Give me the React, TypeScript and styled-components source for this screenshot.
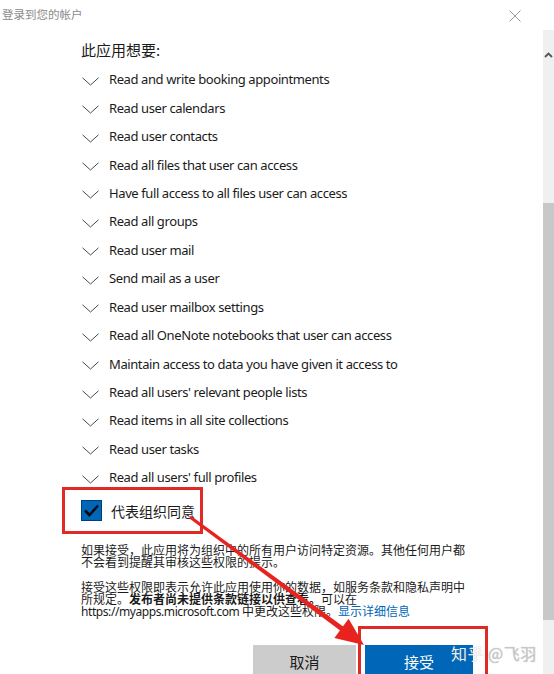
import React from "react";
import styled, { createGlobalStyle } from "styled-components";

const Global = createGlobalStyle`
  html, body { margin: 0; padding: 0; background: #fff; }
  body { width: 554px; height: 674px; overflow: hidden; font-family: "Noto Sans", "Noto Sans CJK SC", sans-serif; }
`;

const Page = styled.div`
  position: relative;
  width: 554px;
  height: 674px;
  overflow: hidden;
  display: flex;
  flex-direction: column;
`;

const TitleBar = styled.div`
  height: 30px;
  flex: none;
  display: flex;
  align-items: flex-start;
  justify-content: space-between;
  padding: 6px 33px 0 2px;
  box-sizing: border-box;
`;

const Title = styled.div`
  font-family: "Noto Sans CJK SC", sans-serif;
  font-size: 11.5px;
  line-height: 16px;
  color: #8a8a8a;
`;

const CloseIcon = styled.svg`
  margin-top: 4px;
`;

const Body = styled.div`
  flex: 1;
  display: flex;
  min-height: 0;
`;

const Content = styled.div`
  flex: 1;
  padding: 10px 0 0 81px;
  min-width: 0;
`;

const Heading = styled.div`
  font-family: "Noto Sans CJK SC", sans-serif;
  font-size: 15px;
  line-height: 20px;
  color: #1b1b1b;
  margin-bottom: 5px;
`;

const List = styled.ul`
  list-style: none;
  margin: 0;
  padding: 0;
`;

const Row = styled.li`
  height: 28.45px;
  display: flex;
  align-items: center;
  gap: 10px;
  font-family: "Noto Sans", sans-serif;
  font-size: 13px;
  letter-spacing: -0.4px;
  color: #1b1b1b;
`;

const Chevron = styled.svg`
  flex: none;
  margin-top: 4px;
  margin-left: 1px;
`;

const CheckRow = styled.div`
  display: flex;
  align-items: center;
  gap: 9px;
  margin-top: 8px;
  height: 22px;
`;

const Box = styled.div`
  width: 21px;
  height: 21px;
  box-sizing: border-box;
  background: #0067b8;
  border: 1px solid #00407a;
  display: flex;
  align-items: center;
  justify-content: center;
`;

const CheckLabel = styled.span`
  font-family: "Noto Sans CJK SC", sans-serif;
  font-size: 14px;
  color: #1b1b1b;
`;

const Para = styled.p`
  font-family: "Noto Sans CJK SC", sans-serif;
  font-size: 12px;
  line-height: 12px;
  color: #1b1b1b;
  margin: 0;
  width: 392px;
  word-break: break-all;
`;

const Para1 = styled(Para)`
  margin-top: 22px;
`;

const Para2 = styled(Para)`
  margin-top: 13px;
`;

const Url = styled.span`
  font-family: "Noto Sans", sans-serif;
  letter-spacing: -0.42px;
  line-height: 12px;
`;

const Link = styled.span`
  color: #0067b8;
`;

const Buttons = styled.div`
  display: flex;
  gap: 9px;
  margin-top: 27px;
  margin-left: 172px;
`;

const Button = styled.button<{ $primary?: boolean }>`
  width: ${(p) => (p.$primary ? "108px" : "103px")};
  height: 34px;
  border: none;
  padding: 0;
  background: ${(p) => (p.$primary ? "#0067b8" : "#cccccc")};
  color: ${(p) => (p.$primary ? "#fff" : "#1b1b1b")};
  font-family: "Noto Sans CJK SC", sans-serif;
  font-size: 15px;
`;

const ScrollTrack = styled.div`
  width: 11px;
  flex: none;
  background: #f0f0f0;
  display: flex;
  flex-direction: column;
`;

const ScrollUp = styled.div`
  height: 14px;
  display: flex;
  justify-content: center;
  align-items: flex-end;
  margin-top: 14px;
`;

const Thumb = styled.div`
  margin-top: 145px;
  height: 417px;
  background: #c8c8c8;
`;

const RedBox = styled.div`
  position: absolute;
  border: 3px solid #e02a26;
  box-sizing: border-box;
`;

const Arrow = styled.svg`
  position: absolute;
  left: 0;
  top: 0;
  pointer-events: none;
`;

const Watermark = styled.div`
  position: absolute;
  left: 451px;
  top: 641px;
  font-family: "Noto Sans CJK SC", sans-serif;
  font-size: 16px;
  color: rgba(255, 255, 255, 0.9);
  text-shadow: 0 0 1px rgba(120, 120, 120, 0.5);
  letter-spacing: 0.5px;
`;

const WatermarkGrey = styled.span`
  color: rgba(200, 200, 200, 0.9);
`;

const perms = [
  "Read and write booking appointments",
  "Read user calendars",
  "Read user contacts",
  "Read all files that user can access",
  "Have full access to all files user can access",
  "Read all groups",
  "Read user mail",
  "Send mail as a user",
  "Read user mailbox settings",
  "Read all OneNote notebooks that user can access",
  "Maintain access to data you have given it access to",
  "Read all users' relevant people lists",
  "Read items in all site collections",
  "Read user tasks",
  "Read all users' full profiles",
];

export default function App() {
  return (
    <Page>
      <Global />
      <TitleBar>
        <Title>登录到您的帐户</Title>
        <CloseIcon width="12" height="12" viewBox="0 0 12 12">
          <path d="M0.5 0.5 L11.5 11.5 M11.5 0.5 L0.5 11.5" stroke="#9a9a9a" strokeWidth="1" fill="none" />
        </CloseIcon>
      </TitleBar>
      <Body>
        <Content>
          <Heading>此应用想要:</Heading>
          <List>
            {perms.map((p) => (
              <Row key={p}>
                <Chevron width="17" height="9" viewBox="0 0 17 9">
                  <polyline points="0.5,0.8 8.5,8 16.5,0.8" stroke="#4a4a4a" strokeWidth="1" fill="none" />
                </Chevron>
                {p}
              </Row>
            ))}
          </List>
          <CheckRow>
            <Box>
              <svg width="17" height="15" viewBox="0 0 17 15">
                <polyline points="2,7.5 6.5,12 15,2.5" stroke="#0b0b14" strokeWidth="2.6" fill="none" />
              </svg>
            </Box>
            <CheckLabel>代表组织同意</CheckLabel>
          </CheckRow>
          <Para1>如果接受，此应用将为组织中的所有用户访问特定资源。其他任何用户都不会看到提醒其审核这些权限的提示。</Para1>
          <Para2>
            接受这些权限即表示允许此应用使用你的数据，如服务条款和隐私声明中所规定。<b>发布者尚未提供条款链接以供查看。</b>可以在
            <br />
            <Url>https://myapps.microsoft.com</Url> 中更改这些权限。<Link>显示详细信息</Link>
          </Para2>
          <Buttons>
            <Button>取消</Button>
            <Button $primary>接受</Button>
          </Buttons>
        </Content>
        <ScrollTrack>
          <ScrollUp>
            <svg width="9" height="6" viewBox="0 0 9 6">
              <polyline points="1,5 4.5,1.5 8,5" stroke="#555" strokeWidth="1.8" fill="none" />
            </svg>
          </ScrollUp>
          <Thumb />
        </ScrollTrack>
      </Body>
      <RedBox style={{ left: 62, top: 487, width: 141, height: 47 }} />
      <RedBox style={{ left: 358, top: 626, width: 130, height: 60 }} />
      <Arrow width="554" height="674" viewBox="0 0 554 674">
        <polygon points="189.1,518.2 190.9,515.8 344.5,627.5 341.5,631.5" fill="#e8231f" />
        <polygon points="334.4,638 348.6,618.7 364,645" fill="#e8231f" />
      </Arrow>
      <Watermark>
        知乎 <WatermarkGrey>@飞羽</WatermarkGrey>
      </Watermark>
    </Page>
  );
}
